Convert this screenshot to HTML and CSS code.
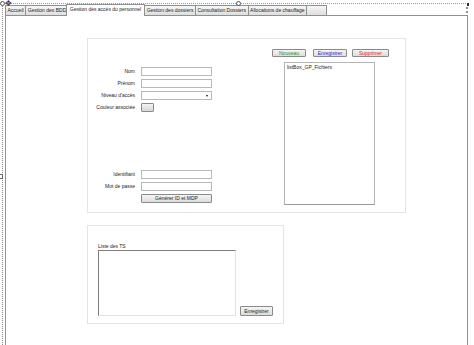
FILE: index.html
```html
<!DOCTYPE html>
<html lang="fr">
<head>
  <meta charset="UTF-8" />
  <title>Gestion des accès du personnel</title>
  <link rel="stylesheet" href="styles.css">
</head>
<body>

  <div class="designer">
    <span class="handle handle-tl"></span>
    <span class="move-icon">✥</span>
    <span class="handle handle-tc"></span>
    <span class="handle-sq handle-tr"></span>
    <span class="handle-sq handle-ml"></span>

    <div class="tabs">
      <div class="tab">Accueil</div>
      <div class="tab">Gestion des BDD</div>
      <div class="tab active">Gestion des accès du personnel</div>
      <div class="tab">Gestion des dossiers</div>
      <div class="tab">Consultation Dossiers</div>
      <div class="tab">Allocations de chauffage</div>
      <div class="tab empty"></div>
    </div>

    <div class="tabpage">
      <section class="group group-perso">
        <div class="form-col">
          <div class="fields">
            <label>Nom</label><div class="input"></div>
            <label>Prénom</label><div class="input"></div>
            <label>Niveau d'accès</label><div class="input select"><span class="caret"></span></div>
            <label>Couleur associée</label><div class="color-btn"></div>
          </div>
          <div class="fields login">
            <label>Identifiant</label><div class="input"></div>
            <label>Mot de passe</label><div class="input"></div>
            <span></span><button class="btn btn-gen">Générer ID et MDP</button>
          </div>
        </div>

        <div class="files-col">
          <div class="actions">
            <button class="btn btn-new">Nouveau</button>
            <button class="btn btn-save">Enregistrer</button>
            <button class="btn btn-del">Supprimer</button>
          </div>
          <div class="listbox">listBox_GP_Fichiers</div>
        </div>
      </section>

      <section class="group group-ts">
        <div class="ts-field">
          <label>Liste des TS</label>
          <div class="textarea"></div>
        </div>
        <button class="btn btn-ts">Enregistrer</button>
      </section>
    </div>
  </div>

</body>
</html>
```

FILE: styles.css
```css
body {
  margin: 0;
  background: #fff;
  font-family: "Liberation Sans", Arial, sans-serif;
  font-size: 5px;
  color: #222;
  overflow: hidden;
}

/* designer selection frame */
.designer {
  position: relative;
  margin: 3px 0 0 2px;
  width: 466px;
  height: 342px;
  border-top: 1px dotted #9a9a9a;
  border-left: 1px dotted #8a8a8a;
  border-right: 2px dotted #8f8f8f;
  padding-left: 2px;
  box-sizing: border-box;
}

.handle {
  position: absolute;
  width: 3px;
  height: 3px;
  border: 1px solid #555;
  border-radius: 50%;
  background: #fff;
}

.handle-tl {
  left: -3px;
  top: -3px;
}

.handle-tc {
  left: 233px;
  top: -3px;
}

.handle-sq {
  position: absolute;
  width: 2px;
  height: 3px;
  background: #333;
  border: 1px solid #fff;
}

.handle-tr {
  right: -4px;
  top: -2px;
}

.handle-ml {
  left: -4px;
  top: 170px;
  background: #fff;
  border-color: #666;
}

.move-icon {
  position: absolute;
  left: 2px;
  top: -4px;
  font-size: 8px;
  line-height: 8px;
  color: #333;
}

/* tabs */
.tabs {
  display: flex;
  align-items: flex-end;
  height: 11px;
}

.tab {
  height: 9px;
  line-height: 9px;
  padding: 0 1.5px;
  margin-right: -1px;
  border: 1px solid #8e8f8f;
  border-bottom: none;
  background: linear-gradient(#f6f6f6, #dedede);
  white-space: nowrap;
}

.tab.active {
  position: relative;
  z-index: 1;
  height: 11px;
  margin: 0 -1px -1px -2px;
  padding: 0 3px;
  background: #fff;
}

.tab.empty {
  width: 16px;
}

.tabpage {
  width: 463px;
  height: 330px;
  box-sizing: border-box;
  border: 1px solid #8e8f8f;
  border-bottom: none;
  background: #fff;
  padding: 22px 0 0 81px;
}

/* groups */
.group {
  box-sizing: border-box;
  border: 1px solid #e4e4e4;
}

.group-perso {
  display: flex;
  width: 319px;
  height: 175px;
}

.form-col {
  padding-top: 28px;
}

.fields {
  display: grid;
  grid-template-columns: 47px 71px;
  grid-auto-rows: 9px;
  column-gap: 6px;
  row-gap: 3px;
}

.fields label {
  text-align: right;
  line-height: 9px;
  white-space: nowrap;
}

.fields.login {
  margin-top: 58px;
}

.input {
  position: relative;
  box-sizing: border-box;
  border: 1px solid #b9b9b9;
  background: #fff;
}

.caret {
  position: absolute;
  right: 3px;
  top: 3px;
  border-left: 1.5px solid transparent;
  border-right: 1.5px solid transparent;
  border-top: 2px solid #111;
}

.color-btn {
  width: 13px;
  box-sizing: border-box;
  border: 1px solid #8a8a8a;
  border-radius: 1px;
  background: linear-gradient(#f3f3f3, #d8d8d8);
}

.btn {
  margin: 0;
  padding: 0;
  box-sizing: border-box;
  border: 1px solid #8a8a8a;
  border-radius: 1px;
  background: linear-gradient(#f5f5f5, #dcdcdc);
  font-family: inherit;
  font-size: 5px;
  line-height: 7px;
  color: #222;
}

.files-col {
  margin-left: 60px;
  padding-top: 10px;
}

.actions {
  display: flex;
  height: 8px;
}

.btn-new {
  width: 34px;
  color: #2f8f2f;
}

.btn-save {
  width: 34px;
  margin-left: 7px;
  color: #2a2ad6;
}

.btn-del {
  width: 37px;
  margin-left: 5px;
  color: #e02828;
}

.listbox {
  box-sizing: border-box;
  width: 91px;
  height: 143px;
  margin: 5px 0 0 12px;
  padding: 1px 2px;
  border: 1px solid #b4b4b4;
  border-bottom-color: #9a9a9a;
  line-height: 6px;
}

.group-ts {
  display: flex;
  align-items: flex-end;
  width: 197px;
  height: 99px;
  margin-top: 12px;
  padding: 0 0 7px 10px;
}

.ts-field label {
  display: block;
  line-height: 6px;
  margin-bottom: 1px;
}

.textarea {
  box-sizing: border-box;
  width: 138px;
  height: 66px;
  border: 1px solid #e2e2e2;
  border-top-color: #7d7d7d;
  border-left-color: #7d7d7d;
}

.btn-ts {
  width: 33px;
  height: 10px;
  margin-left: 4px;
}
```
